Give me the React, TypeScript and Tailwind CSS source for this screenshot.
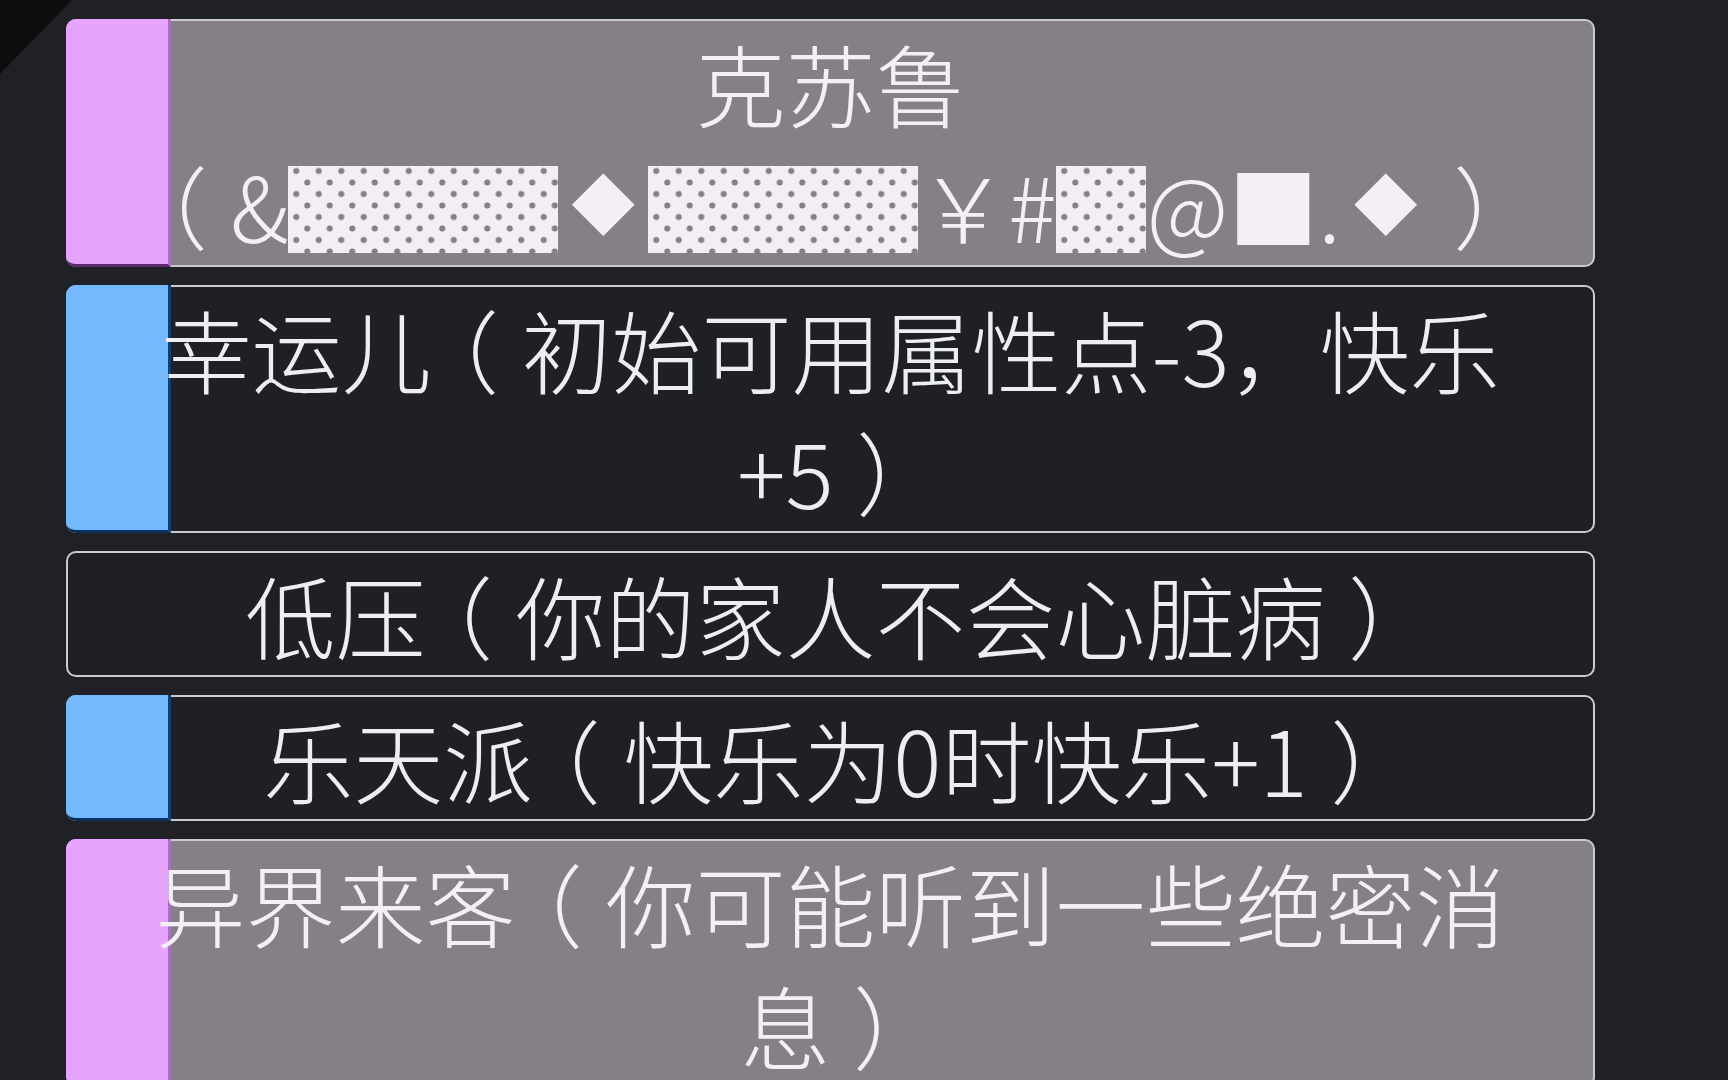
const cards = [
  { lines: ["克苏鲁", "（&▓▓▓◆▓▓▓￥#▓@■.◆）"], bar: "pink", tone: "gray" },
  { lines: ["幸运儿（初始可用属性点-3，快乐", "+5）"], bar: "blue", tone: "dark" },
  { lines: ["低压（你的家人不会心脏病）"], bar: "none", tone: "dark" },
  { lines: ["乐天派（快乐为0时快乐+1）"], bar: "blue", tone: "dark" },
  { lines: ["异界来客（你可能听到一些绝密消", "息）"], bar: "pink", tone: "gray" },
];

const barClass: Record<string, string> = {
  pink: "bg-[#e6a4fe] border-r-[3px] border-b-[3px] border-r-[#a86fc2] border-b-[#5a2a6e]",
  blue: "bg-[#74b9fe] border-r-[3px] border-b-[3px] border-r-[#0c3e78] border-b-[#0a2f5c]",
};

// the device font centres full-width brackets and draws shade blocks as dot grids
function Glyph({ ch }: { ch: string }) {
  if (ch === "（" || ch === "）")
    return (
      <span className="inline-block w-[1em] text-center leading-none [font-feature-settings:'halt']">{ch}</span>
    );
  if (ch === "▓")
    return (
      <span className="inline-block h-[87px] w-[1em] overflow-hidden align-[-10px] bg-[#f3eef5] bg-[radial-gradient(circle,#857f87_2.8px,transparent_3.3px),radial-gradient(circle,#857f87_2.8px,transparent_3.3px)] [background-size:22.5px_23px] [background-position:-3px_-6.5px,8px_5px]">
        <span className="block text-center text-[50px] leading-[87px] text-transparent">{ch}</span>
      </span>
    );
  if (ch === "◆")
    return (
      <span className="inline-block w-[90px] text-center align-[14px] text-[64px] leading-none">{ch}</span>
    );
  return <>{ch}</>;
}

function Line({ text }: { text: string }) {
  return (
    <div>
      {Array.from(text).map((ch, i) => (
        <Glyph key={i} ch={ch} />
      ))}
    </div>
  );
}

function Card({ lines, bar, tone }: { lines: string[]; bar: string; tone: string }) {
  const gray = tone === "gray";
  return (
    <div className="grid">
      <div
        className={
          "col-start-1 row-start-1 rounded-[10px] border-2 border-[#cbcacf] " +
          (gray ? "bg-[#857f87]" : "bg-[#1e2025]")
        }
      />
      {bar !== "none" && (
        <div
          className={
            "col-start-1 row-start-1 w-[105px] justify-self-start rounded-l-[10px] " + barClass[bar]
          }
        />
      )}
      <div
        className={
          "col-start-1 row-start-1 py-[2px] text-center text-[90px] font-light leading-[122px] whitespace-nowrap " +
          (gray ? "text-[#f4eff6]" : "text-[#eceef1]")
        }
      >
        {lines.map((l, i) => (
          <Line key={i} text={l} />
        ))}
      </div>
    </div>
  );
}

export default function App() {
  return (
    <div className="relative h-[1080px] w-full overflow-hidden bg-[#1f2126] font-['Noto_Sans_CJK_SC','Noto_Sans',sans-serif]">
      <svg className="absolute left-0 top-0" width="80" height="80" viewBox="0 0 80 80">
        <polygon points="0,0 72,0 0,74" fill="#0d0d0e" />
      </svg>
      <div className="ml-[66px] flex w-[1529px] flex-col gap-[18px] pt-[19px]">
        {cards.map((c, i) => (
          <Card key={i} {...c} />
        ))}
      </div>
    </div>
  );
}
